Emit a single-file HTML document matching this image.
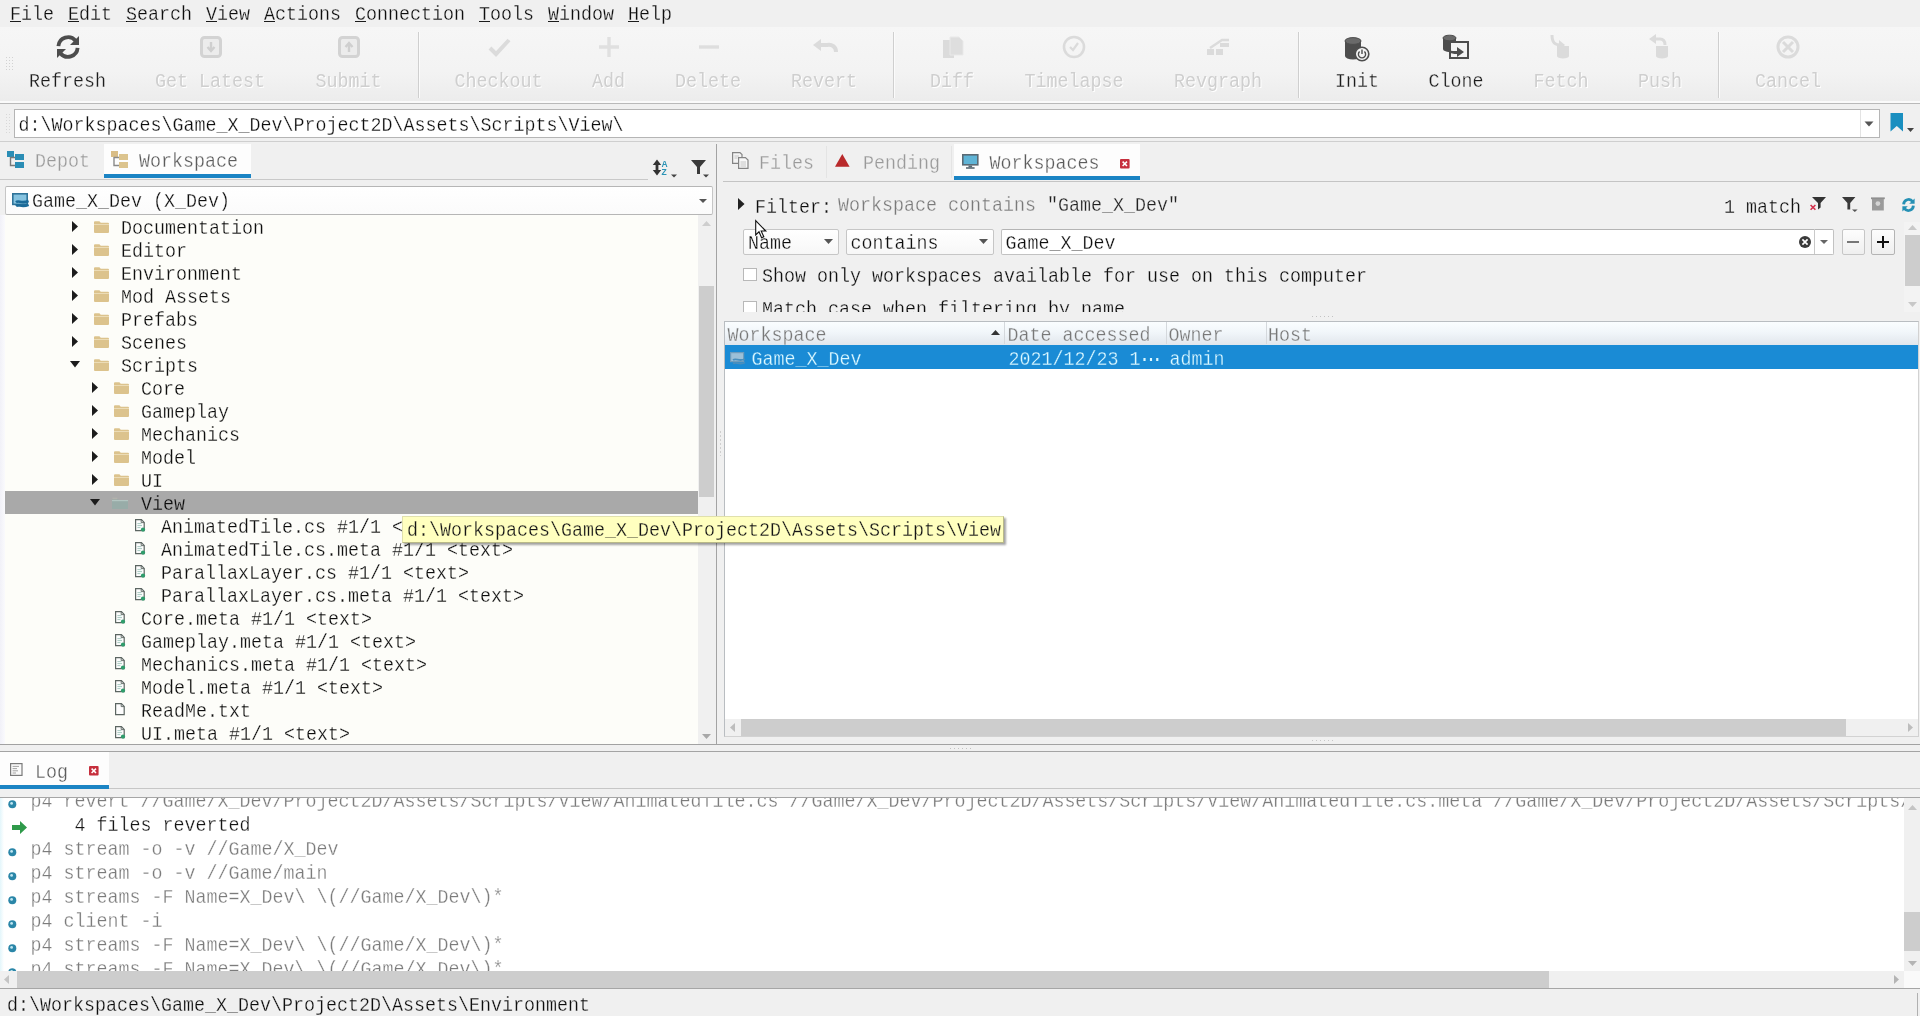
<!DOCTYPE html><html><head><meta charset="utf-8"><title>P4V</title><style>
html,body{margin:0;padding:0}
body{width:1920px;height:1016px;overflow:hidden;background:#f0f0f0;position:relative;font-family:"Liberation Mono",monospace;}
.t{position:absolute;font:18.33px/23px "Liberation Mono",monospace;white-space:pre;color:#0e0e0e;transform:scaleY(1.08);transform-origin:0 16px;}
.t u{text-decoration-thickness:1px;text-underline-offset:2px}
.dis{color:#cfcfcf;text-shadow:1px 1px 0 #fff}
.g{color:#8a8a8a}
svg{overflow:visible}
#wrap{position:absolute;left:0;top:0;width:1920px;height:1016px;will-change:transform}
</style></head><body><div id="wrap">
<div style="position:absolute;left:0px;top:0px;width:1920px;height:27px;background:#f0f0f0"></div>
<span class="t" style="left:10px;top:4px;-webkit-text-stroke:0.25px #f0f0f0;">File</span>
<div style="position:absolute;left:10px;top:21px;width:11px;height:1px;background:#1c1c1c"></div>
<span class="t" style="left:68px;top:4px;-webkit-text-stroke:0.25px #f0f0f0;">Edit</span>
<div style="position:absolute;left:68px;top:21px;width:11px;height:1px;background:#1c1c1c"></div>
<span class="t" style="left:126px;top:4px;-webkit-text-stroke:0.25px #f0f0f0;">Search</span>
<div style="position:absolute;left:126px;top:21px;width:11px;height:1px;background:#1c1c1c"></div>
<span class="t" style="left:206px;top:4px;-webkit-text-stroke:0.25px #f0f0f0;">View</span>
<div style="position:absolute;left:206px;top:21px;width:11px;height:1px;background:#1c1c1c"></div>
<span class="t" style="left:264px;top:4px;-webkit-text-stroke:0.25px #f0f0f0;">Actions</span>
<div style="position:absolute;left:264px;top:21px;width:11px;height:1px;background:#1c1c1c"></div>
<span class="t" style="left:355px;top:4px;-webkit-text-stroke:0.25px #f0f0f0;">Connection</span>
<div style="position:absolute;left:355px;top:21px;width:11px;height:1px;background:#1c1c1c"></div>
<span class="t" style="left:479px;top:4px;-webkit-text-stroke:0.25px #f0f0f0;">Tools</span>
<div style="position:absolute;left:479px;top:21px;width:11px;height:1px;background:#1c1c1c"></div>
<span class="t" style="left:548px;top:4px;-webkit-text-stroke:0.25px #f0f0f0;">Window</span>
<div style="position:absolute;left:548px;top:21px;width:11px;height:1px;background:#1c1c1c"></div>
<span class="t" style="left:628px;top:4px;-webkit-text-stroke:0.25px #f0f0f0;">Help</span>
<div style="position:absolute;left:628px;top:21px;width:11px;height:1px;background:#1c1c1c"></div>
<div style="position:absolute;left:0px;top:27px;width:1920px;height:74px;background:linear-gradient(#f6f6f6,#f3f3f3 60%,#ececec)"></div>
<div style="position:absolute;left:0px;top:101px;width:1920px;height:2px;background:#fafafa"></div>
<div style="position:absolute;left:0px;top:103px;width:1920px;height:1px;background:#b9b9b9"></div>
<div style="position:absolute;left:5px;top:56px;width:8px;height:16px;background-image:radial-gradient(#d2d2d2 0.8px,transparent 1px);background-size:3px 3px"></div>
<div style="position:absolute;left:418px;top:32px;width:1px;height:66px;background:#cfcfcf"></div>
<div style="position:absolute;left:419px;top:32px;width:1px;height:66px;background:#fbfbfb"></div>
<div style="position:absolute;left:893px;top:32px;width:1px;height:66px;background:#cfcfcf"></div>
<div style="position:absolute;left:894px;top:32px;width:1px;height:66px;background:#fbfbfb"></div>
<div style="position:absolute;left:1298px;top:32px;width:1px;height:66px;background:#cfcfcf"></div>
<div style="position:absolute;left:1299px;top:32px;width:1px;height:66px;background:#fbfbfb"></div>
<div style="position:absolute;left:1718px;top:32px;width:1px;height:66px;background:#cfcfcf"></div>
<div style="position:absolute;left:1719px;top:32px;width:1px;height:66px;background:#fbfbfb"></div>
<svg style="position:absolute;left:56px;top:35px" width="24" height="24" viewBox="0 0 24 24"><g fill="none" stroke="#4d4d4d" stroke-width="3.8">
<path d="M2.4 11.2 A9.7 9.7 0 0 1 19.6 5.8"/><path d="M21.6 12.8 A9.7 9.7 0 0 1 4.4 18.2"/></g>
<path d="M23 1 L23 10 L14 10 Z" fill="#4d4d4d"/><path d="M1 23 L1 14 L10 14 Z" fill="#4d4d4d"/></svg>
<span class="t" style="left:29.0px;top:71px;color:#1c1c1c;-webkit-text-stroke:0.25px #f0f0f0;">Refresh</span>
<svg style="position:absolute;left:200px;top:36px" width="22" height="22" viewBox="0 0 22 22"><rect x="1.5" y="1.5" width="19" height="19" rx="3" fill="#ececec" stroke="#d3d3d3" stroke-width="3"/>
<path d="M11 6 V14 M7.5 11 L11 15 L14.5 11" stroke="#cfcfcf" stroke-width="2.4" fill="none"/></svg>
<span class="t dis" style="left:155.0px;top:71px;">Get Latest</span>
<svg style="position:absolute;left:338px;top:36px" width="22" height="22" viewBox="0 0 22 22"><rect x="1.5" y="1.5" width="19" height="19" rx="3" fill="#ececec" stroke="#d3d3d3" stroke-width="3"/>
<path d="M11 16 V8 M7.5 11 L11 7 L14.5 11" stroke="#cfcfcf" stroke-width="2.4" fill="none"/></svg>
<span class="t dis" style="left:315.5px;top:71px;">Submit</span>
<svg style="position:absolute;left:488px;top:37px" width="24" height="20" viewBox="0 0 24 20"><path d="M2 11 L8 17 L21 3" stroke="#dbdbdb" stroke-width="4" fill="none"/></svg>
<span class="t dis" style="left:454.5px;top:71px;">Checkout</span>
<svg style="position:absolute;left:598px;top:36px" width="22" height="22" viewBox="0 0 22 22"><path d="M11 1 V21 M1 11 H21" stroke="#e0e0e0" stroke-width="3.4"/></svg>
<span class="t dis" style="left:592.0px;top:71px;">Add</span>
<svg style="position:absolute;left:698px;top:36px" width="22" height="22" viewBox="0 0 22 22"><path d="M1 11 H21" stroke="#dedede" stroke-width="3.4"/></svg>
<span class="t dis" style="left:675.0px;top:71px;">Delete</span>
<svg style="position:absolute;left:812px;top:38px" width="26" height="18" viewBox="0 0 26 18"><path d="M9 1 L1 7 L9 13 Z" fill="#dbdbdb"/><path d="M7 7 H15 A7 7 0 0 1 24 14" stroke="#dbdbdb" stroke-width="4" fill="none"/></svg>
<span class="t dis" style="left:791.0px;top:71px;">Revert</span>
<svg style="position:absolute;left:942px;top:36px" width="22" height="24" viewBox="0 0 22 24"><path d="M1 4 H12 V22 H1 Z" fill="#dbdbdb"/><path d="M8 1 H17 L21 5 V19 H8 Z" fill="#dedede" stroke="#e9e9e9" stroke-width="1"/></svg>
<span class="t dis" style="left:930.0px;top:71px;">Diff</span>
<svg style="position:absolute;left:1062px;top:35px" width="24" height="24" viewBox="0 0 24 24"><circle cx="12" cy="12" r="10" fill="none" stroke="#dbdbdb" stroke-width="2.6"/><path d="M8 12 L11 15 L16 8" stroke="#dbdbdb" stroke-width="2.2" fill="none"/></svg>
<span class="t dis" style="left:1024.5px;top:71px;">Timelapse</span>
<svg style="position:absolute;left:1206px;top:38px" width="24" height="18" viewBox="0 0 24 18"><path d="M1 17 V11 H8 V17 Z M10 17 V11 H17 V17 Z M14 9 V5 H23 V9 Z" fill="#dbdbdb"/><path d="M4 10 L16 2 L23 2" stroke="#dbdbdb" stroke-width="2.4" fill="none"/></svg>
<span class="t dis" style="left:1174.0px;top:71px;">Revgraph</span>
<svg style="position:absolute;left:1344px;top:36px" width="26" height="26" viewBox="0 0 26 26"><path d="M1 5 V20 A8 3.4 0 0 0 17 20 V5 Z" fill="#4d4d4d"/><ellipse cx="9" cy="5" rx="8" ry="3.4" fill="#6a6a6a" stroke="#4d4d4d" stroke-width="1"/>
<circle cx="18" cy="18" r="6.8" fill="#f4f4f4" stroke="#4d4d4d" stroke-width="1.6"/><path d="M15.6 15.6 A3.6 3.6 0 1 0 20.4 15.6 M18 13.6 V18" stroke="#4d4d4d" stroke-width="1.4" fill="none"/></svg>
<span class="t" style="left:1335.0px;top:71px;color:#1c1c1c;-webkit-text-stroke:0.25px #f0f0f0;">Init</span>
<svg style="position:absolute;left:1442px;top:34px" width="28" height="26" viewBox="0 0 28 26"><path d="M1 4 V15 A6.5 3 0 0 0 14 15 V4 Z" fill="#4d4d4d"/><ellipse cx="7.5" cy="4" rx="6.5" ry="2.8" fill="#6a6a6a" stroke="#4d4d4d" stroke-width="1"/>
<rect x="8" y="8" width="18" height="16" fill="#f4f4f4" stroke="#4d4d4d" stroke-width="2"/><path d="M3 10 C5 17 9 17 15 17 V13 L22 18 L15 23 V20 C8 20 4 18 3 10 Z" fill="#4d4d4d"/></svg>
<span class="t" style="left:1428.5px;top:71px;color:#1c1c1c;-webkit-text-stroke:0.25px #f0f0f0;">Clone</span>
<svg style="position:absolute;left:1549px;top:34px" width="24" height="26" viewBox="0 0 24 26"><path d="M8 12 V22 A6 2.6 0 0 0 20 22 V12 Z" fill="#dbdbdb"/><path d="M3 1 C3 9 6 11 12 11" stroke="#dbdbdb" stroke-width="3" fill="none"/><path d="M10 6 L16 11 L10 16 Z" fill="#dbdbdb"/></svg>
<span class="t dis" style="left:1533.5px;top:71px;">Fetch</span>
<svg style="position:absolute;left:1648px;top:34px" width="24" height="26" viewBox="0 0 24 26"><path d="M8 12 V22 A6 2.6 0 0 0 20 22 V12 Z" fill="#dbdbdb"/><path d="M5 5 H12 C16 5 17 8 17 11" stroke="#dbdbdb" stroke-width="3" fill="none"/><path d="M8 0 L1 5 L8 10 Z" fill="#dbdbdb"/></svg>
<span class="t dis" style="left:1638.0px;top:71px;">Push</span>
<svg style="position:absolute;left:1776px;top:35px" width="24" height="24" viewBox="0 0 24 24"><circle cx="12" cy="12" r="10" fill="none" stroke="#dbdbdb" stroke-width="3"/><path d="M7 7 L17 17 M17 7 L7 17" stroke="#dbdbdb" stroke-width="3"/></svg>
<span class="t dis" style="left:1755.0px;top:71px;">Cancel</span>
<div style="position:absolute;left:14px;top:109px;width:1866px;height:29px;background:#fff;border:1px solid #b5b5b5;box-sizing:border-box"></div>
<div style="position:absolute;left:5px;top:113px;width:6px;height:20px;background-image:radial-gradient(#d8d8d8 0.8px,transparent 1px);background-size:3px 3px"></div>
<span class="t" style="left:18.5px;top:115px;-webkit-text-stroke:0.25px #fff;">d:\Workspaces\Game_X_Dev\Project2D\Assets\Scripts\View\</span>
<div style="position:absolute;left:1860px;top:110px;width:1px;height:27px;background:#e3e3e3"></div>
<svg style="position:absolute;left:1864px;top:121px" width="10" height="6" viewBox="0 0 10 6"><path d="M0.5 0.5 H9.5 L5 5.5 Z" fill="#555"/></svg>
<svg style="position:absolute;left:1890px;top:113px" width="14" height="19" viewBox="0 0 14 19"><path d="M0.5 0 H13 V18.5 L6.8 13 L0.5 18.5 Z" fill="#1a8fc0"/></svg>
<svg style="position:absolute;left:1907px;top:128px" width="7" height="4" viewBox="0 0 7 4"><path d="M0 0 H7 L3.5 4 Z" fill="#444"/></svg>
<div style="position:absolute;left:0px;top:141px;width:1920px;height:1px;background:#cfcfcf"></div>
<div style="position:absolute;left:104px;top:144px;width:147px;height:30px;background:#fdfdfd"></div>
<div style="position:absolute;left:104px;top:174px;width:147px;height:4px;background:#1b84c4"></div>
<div style="position:absolute;left:0px;top:179px;width:648px;height:1px;background:#c9c9c9"></div>
<svg style="position:absolute;left:7px;top:150px" width="18" height="18" viewBox="0 0 18 18"><rect x="0" y="1" width="7" height="6" fill="#2a8db5"/><rect x="8" y="4" width="9" height="6" fill="#2a8db5"/><rect x="8" y="12" width="9" height="6" fill="#2a8db5"/>
<path d="M3.5 7 V15.5 H8 M3.5 7.5 H8" stroke="#7a7a7a" stroke-width="1.4" fill="none"/></svg>
<span class="t" style="left:35px;top:151px;color:#9a9a9a;-webkit-text-stroke:0.25px #f0f0f0;">Depot</span>
<svg style="position:absolute;left:111px;top:151px" width="18" height="17" viewBox="0 0 18 17"><rect x="0" y="0" width="7" height="6" fill="#d9bd86"/><rect x="8" y="3" width="9" height="6" fill="#dcc48e"/><rect x="8" y="11" width="9" height="6" fill="#dcc48e"/>
<path d="M3 6 V14.5 H8 M3 6.5 H8" stroke="#8a8a8a" stroke-width="1.4" fill="none"/></svg>
<span class="t" style="left:139px;top:151px;color:#5c5c5c;-webkit-text-stroke:0.25px #fdfdfd;">Workspace</span>
<svg style="position:absolute;left:652px;top:159px" width="26" height="19" viewBox="0 0 26 19"><path d="M5 0.5 L9.2 6 H6.4 V11 H9.2 L5 16.5 L0.8 11 H3.6 V6 H0.8 Z" fill="#333"/>
<text x="9.5" y="8" font-family="Liberation Sans" font-weight="bold" font-size="8.5" fill="#2a93b5">A</text><text x="9.5" y="16" font-family="Liberation Sans" font-weight="bold" font-size="8.5" fill="#2a93b5">Z</text>
<path d="M19 15.5 H25 L22 18.5 Z" fill="#444"/></svg>
<svg style="position:absolute;left:691px;top:160px" width="18" height="19" viewBox="0 0 18 19"><path d="M0 0 H15 L9 7 V14 H6 V7 Z" fill="#3a3a3a"/><path d="M12 14.5 H18 L15 17.5 Z" fill="#444"/></svg>
<div style="position:absolute;left:5px;top:186px;width:708px;height:29px;background:linear-gradient(#ffffff,#fbfbfb);border:1px solid #c6c6c6;border-top-color:#b6b6b6;border-bottom-color:#b6b6b6;box-sizing:border-box;border-radius:2px"></div>
<svg style="position:absolute;left:12px;top:193px" width="18" height="16" viewBox="0 0 18 16"><rect x="0.8" y="0.8" width="14.4" height="10.6" fill="#86c3e0" stroke="#2f7399" stroke-width="1.6"/>
<path d="M4 9.2 C6.5 7 9.5 11 16.6 8 M4 13 C6.5 10.8 9.5 14.8 16.6 11.8" stroke="#1b6b99" stroke-width="2.6" fill="none"/></svg>
<span class="t" style="left:32px;top:191px;-webkit-text-stroke:0.25px #fdfdfd;">Game_X_Dev (X_Dev)</span>
<svg style="position:absolute;left:699px;top:199px" width="8" height="4" viewBox="0 0 8 4"><path d="M0 0 H8 L4 4 Z" fill="#555"/></svg>
<div style="position:absolute;left:0px;top:215px;width:5px;height:529px;background:linear-gradient(90deg,#f1f1f8,#fafafd)"></div>
<div style="position:absolute;left:5px;top:215px;width:693px;height:529px;background:#fdfdf9"></div>
<div style="position:absolute;left:5px;top:491px;width:693px;height:23px;background:#a9a9a9"></div>
<div style="position:absolute;left:0px;top:744px;width:1920px;height:1px;background:#a2a2a2"></div>
<svg style="position:absolute;left:72px;top:220.5px" width="7" height="11" viewBox="0 0 7 11"><path d="M0 0 L6 5.5 L0 11 Z" fill="#1c1c1c"/></svg>
<svg style="position:absolute;left:94px;top:220.6px" width="15" height="12" viewBox="0 0 15 12"><path d="M0 1.2 Q0 0.2 1 0.2 H5.4 L6.8 1.8 H14 Q15 1.8 15 2.8 V11 Q15 12 14 12 H1 Q0 12 0 11 Z" fill="#dcc38d"/><rect x="0" y="3" width="15" height="1" fill="#ecdcb6"/></svg>
<span class="t" style="left:121px;top:218px;-webkit-text-stroke:0.25px #fdfdf9;">Documentation</span>
<svg style="position:absolute;left:72px;top:243.5px" width="7" height="11" viewBox="0 0 7 11"><path d="M0 0 L6 5.5 L0 11 Z" fill="#1c1c1c"/></svg>
<svg style="position:absolute;left:94px;top:243.6px" width="15" height="12" viewBox="0 0 15 12"><path d="M0 1.2 Q0 0.2 1 0.2 H5.4 L6.8 1.8 H14 Q15 1.8 15 2.8 V11 Q15 12 14 12 H1 Q0 12 0 11 Z" fill="#dcc38d"/><rect x="0" y="3" width="15" height="1" fill="#ecdcb6"/></svg>
<span class="t" style="left:121px;top:241px;-webkit-text-stroke:0.25px #fdfdf9;">Editor</span>
<svg style="position:absolute;left:72px;top:266.5px" width="7" height="11" viewBox="0 0 7 11"><path d="M0 0 L6 5.5 L0 11 Z" fill="#1c1c1c"/></svg>
<svg style="position:absolute;left:94px;top:266.6px" width="15" height="12" viewBox="0 0 15 12"><path d="M0 1.2 Q0 0.2 1 0.2 H5.4 L6.8 1.8 H14 Q15 1.8 15 2.8 V11 Q15 12 14 12 H1 Q0 12 0 11 Z" fill="#dcc38d"/><rect x="0" y="3" width="15" height="1" fill="#ecdcb6"/></svg>
<span class="t" style="left:121px;top:264px;-webkit-text-stroke:0.25px #fdfdf9;">Environment</span>
<svg style="position:absolute;left:72px;top:289.5px" width="7" height="11" viewBox="0 0 7 11"><path d="M0 0 L6 5.5 L0 11 Z" fill="#1c1c1c"/></svg>
<svg style="position:absolute;left:94px;top:289.6px" width="15" height="12" viewBox="0 0 15 12"><path d="M0 1.2 Q0 0.2 1 0.2 H5.4 L6.8 1.8 H14 Q15 1.8 15 2.8 V11 Q15 12 14 12 H1 Q0 12 0 11 Z" fill="#dcc38d"/><rect x="0" y="3" width="15" height="1" fill="#ecdcb6"/></svg>
<span class="t" style="left:121px;top:287px;-webkit-text-stroke:0.25px #fdfdf9;">Mod Assets</span>
<svg style="position:absolute;left:72px;top:312.5px" width="7" height="11" viewBox="0 0 7 11"><path d="M0 0 L6 5.5 L0 11 Z" fill="#1c1c1c"/></svg>
<svg style="position:absolute;left:94px;top:312.6px" width="15" height="12" viewBox="0 0 15 12"><path d="M0 1.2 Q0 0.2 1 0.2 H5.4 L6.8 1.8 H14 Q15 1.8 15 2.8 V11 Q15 12 14 12 H1 Q0 12 0 11 Z" fill="#dcc38d"/><rect x="0" y="3" width="15" height="1" fill="#ecdcb6"/></svg>
<span class="t" style="left:121px;top:310px;-webkit-text-stroke:0.25px #fdfdf9;">Prefabs</span>
<svg style="position:absolute;left:72px;top:335.5px" width="7" height="11" viewBox="0 0 7 11"><path d="M0 0 L6 5.5 L0 11 Z" fill="#1c1c1c"/></svg>
<svg style="position:absolute;left:94px;top:335.6px" width="15" height="12" viewBox="0 0 15 12"><path d="M0 1.2 Q0 0.2 1 0.2 H5.4 L6.8 1.8 H14 Q15 1.8 15 2.8 V11 Q15 12 14 12 H1 Q0 12 0 11 Z" fill="#dcc38d"/><rect x="0" y="3" width="15" height="1" fill="#ecdcb6"/></svg>
<span class="t" style="left:121px;top:333px;-webkit-text-stroke:0.25px #fdfdf9;">Scenes</span>
<svg style="position:absolute;left:70px;top:361px" width="10" height="7" viewBox="0 0 10 7"><path d="M0 0 H10 L5 6.5 Z" fill="#1c1c1c"/></svg>
<svg style="position:absolute;left:94px;top:358.6px" width="15" height="12" viewBox="0 0 15 12"><path d="M0 1.2 Q0 0.2 1 0.2 H5.4 L6.8 1.8 H14 Q15 1.8 15 2.8 V11 Q15 12 14 12 H1 Q0 12 0 11 Z" fill="#dcc38d"/><rect x="0" y="3" width="15" height="1" fill="#ecdcb6"/></svg>
<span class="t" style="left:121px;top:356px;-webkit-text-stroke:0.25px #fdfdf9;">Scripts</span>
<svg style="position:absolute;left:92px;top:381.5px" width="7" height="11" viewBox="0 0 7 11"><path d="M0 0 L6 5.5 L0 11 Z" fill="#1c1c1c"/></svg>
<svg style="position:absolute;left:114px;top:381.6px" width="15" height="12" viewBox="0 0 15 12"><path d="M0 1.2 Q0 0.2 1 0.2 H5.4 L6.8 1.8 H14 Q15 1.8 15 2.8 V11 Q15 12 14 12 H1 Q0 12 0 11 Z" fill="#dcc38d"/><rect x="0" y="3" width="15" height="1" fill="#ecdcb6"/></svg>
<span class="t" style="left:141px;top:379px;-webkit-text-stroke:0.25px #fdfdf9;">Core</span>
<svg style="position:absolute;left:92px;top:404.5px" width="7" height="11" viewBox="0 0 7 11"><path d="M0 0 L6 5.5 L0 11 Z" fill="#1c1c1c"/></svg>
<svg style="position:absolute;left:114px;top:404.6px" width="15" height="12" viewBox="0 0 15 12"><path d="M0 1.2 Q0 0.2 1 0.2 H5.4 L6.8 1.8 H14 Q15 1.8 15 2.8 V11 Q15 12 14 12 H1 Q0 12 0 11 Z" fill="#dcc38d"/><rect x="0" y="3" width="15" height="1" fill="#ecdcb6"/></svg>
<span class="t" style="left:141px;top:402px;-webkit-text-stroke:0.25px #fdfdf9;">Gameplay</span>
<svg style="position:absolute;left:92px;top:427.5px" width="7" height="11" viewBox="0 0 7 11"><path d="M0 0 L6 5.5 L0 11 Z" fill="#1c1c1c"/></svg>
<svg style="position:absolute;left:114px;top:427.6px" width="15" height="12" viewBox="0 0 15 12"><path d="M0 1.2 Q0 0.2 1 0.2 H5.4 L6.8 1.8 H14 Q15 1.8 15 2.8 V11 Q15 12 14 12 H1 Q0 12 0 11 Z" fill="#dcc38d"/><rect x="0" y="3" width="15" height="1" fill="#ecdcb6"/></svg>
<span class="t" style="left:141px;top:425px;-webkit-text-stroke:0.25px #fdfdf9;">Mechanics</span>
<svg style="position:absolute;left:92px;top:450.5px" width="7" height="11" viewBox="0 0 7 11"><path d="M0 0 L6 5.5 L0 11 Z" fill="#1c1c1c"/></svg>
<svg style="position:absolute;left:114px;top:450.6px" width="15" height="12" viewBox="0 0 15 12"><path d="M0 1.2 Q0 0.2 1 0.2 H5.4 L6.8 1.8 H14 Q15 1.8 15 2.8 V11 Q15 12 14 12 H1 Q0 12 0 11 Z" fill="#dcc38d"/><rect x="0" y="3" width="15" height="1" fill="#ecdcb6"/></svg>
<span class="t" style="left:141px;top:448px;-webkit-text-stroke:0.25px #fdfdf9;">Model</span>
<svg style="position:absolute;left:92px;top:473.5px" width="7" height="11" viewBox="0 0 7 11"><path d="M0 0 L6 5.5 L0 11 Z" fill="#1c1c1c"/></svg>
<svg style="position:absolute;left:114px;top:473.6px" width="15" height="12" viewBox="0 0 15 12"><path d="M0 1.2 Q0 0.2 1 0.2 H5.4 L6.8 1.8 H14 Q15 1.8 15 2.8 V11 Q15 12 14 12 H1 Q0 12 0 11 Z" fill="#dcc38d"/><rect x="0" y="3" width="15" height="1" fill="#ecdcb6"/></svg>
<span class="t" style="left:141px;top:471px;-webkit-text-stroke:0.25px #fdfdf9;">UI</span>
<svg style="position:absolute;left:90px;top:499px" width="10" height="7" viewBox="0 0 10 7"><path d="M0 0 H10 L5 6.5 Z" fill="#1c1c1c"/></svg>
<svg style="position:absolute;left:112px;top:496.6px" width="16" height="12" viewBox="0 0 16 12"><path d="M0 2.2 H6 L7 3 H16 V12 H0 Z" fill="#98aca8"/><rect x="0" y="3" width="16" height="1.2" fill="#b4c6c2"/><path d="M0.4 0.6 H5.4 V2.4 H0.4 Z" fill="#b2b2ac"/></svg>
<span class="t" style="left:141px;top:494px;-webkit-text-stroke:0.25px #a9a9a9;">View</span>
<svg style="position:absolute;left:135px;top:518.5px" width="10" height="13" viewBox="0 0 10 13"><path d="M0.6 0.6 H6.4 L9.2 3.4 V11.6 H0.6 Z" fill="#fdfdfd" stroke="#5c6662" stroke-width="1.2"/><path d="M6.2 0.6 V3.6 H9.2" fill="none" stroke="#5c6662" stroke-width="0.9"/><path d="M2.4 4.6 H6.4 M2.4 6.6 H7 M2.4 8.6 H5.4" stroke="#9ec4ba" stroke-width="0.9"/><circle cx="8" cy="10.6" r="2.1" fill="#2f9d6c"/></svg>
<span class="t" style="left:161px;top:517px;-webkit-text-stroke:0.25px #fdfdf9;">AnimatedTile.cs #1/1 &lt;text&gt;</span>
<svg style="position:absolute;left:135px;top:541.5px" width="10" height="13" viewBox="0 0 10 13"><path d="M0.6 0.6 H6.4 L9.2 3.4 V11.6 H0.6 Z" fill="#fdfdfd" stroke="#5c6662" stroke-width="1.2"/><path d="M6.2 0.6 V3.6 H9.2" fill="none" stroke="#5c6662" stroke-width="0.9"/><path d="M2.4 4.6 H6.4 M2.4 6.6 H7 M2.4 8.6 H5.4" stroke="#9ec4ba" stroke-width="0.9"/><circle cx="8" cy="10.6" r="2.1" fill="#2f9d6c"/></svg>
<span class="t" style="left:161px;top:540px;-webkit-text-stroke:0.25px #fdfdf9;">AnimatedTile.cs.meta #1/1 &lt;text&gt;</span>
<svg style="position:absolute;left:135px;top:564.5px" width="10" height="13" viewBox="0 0 10 13"><path d="M0.6 0.6 H6.4 L9.2 3.4 V11.6 H0.6 Z" fill="#fdfdfd" stroke="#5c6662" stroke-width="1.2"/><path d="M6.2 0.6 V3.6 H9.2" fill="none" stroke="#5c6662" stroke-width="0.9"/><path d="M2.4 4.6 H6.4 M2.4 6.6 H7 M2.4 8.6 H5.4" stroke="#9ec4ba" stroke-width="0.9"/><circle cx="8" cy="10.6" r="2.1" fill="#2f9d6c"/></svg>
<span class="t" style="left:161px;top:563px;-webkit-text-stroke:0.25px #fdfdf9;">ParallaxLayer.cs #1/1 &lt;text&gt;</span>
<svg style="position:absolute;left:135px;top:587.5px" width="10" height="13" viewBox="0 0 10 13"><path d="M0.6 0.6 H6.4 L9.2 3.4 V11.6 H0.6 Z" fill="#fdfdfd" stroke="#5c6662" stroke-width="1.2"/><path d="M6.2 0.6 V3.6 H9.2" fill="none" stroke="#5c6662" stroke-width="0.9"/><path d="M2.4 4.6 H6.4 M2.4 6.6 H7 M2.4 8.6 H5.4" stroke="#9ec4ba" stroke-width="0.9"/><circle cx="8" cy="10.6" r="2.1" fill="#2f9d6c"/></svg>
<span class="t" style="left:161px;top:586px;-webkit-text-stroke:0.25px #fdfdf9;">ParallaxLayer.cs.meta #1/1 &lt;text&gt;</span>
<svg style="position:absolute;left:115px;top:610.5px" width="10" height="13" viewBox="0 0 10 13"><path d="M0.6 0.6 H6.4 L9.2 3.4 V11.6 H0.6 Z" fill="#fdfdfd" stroke="#5c6662" stroke-width="1.2"/><path d="M6.2 0.6 V3.6 H9.2" fill="none" stroke="#5c6662" stroke-width="0.9"/><path d="M2.4 4.6 H6.4 M2.4 6.6 H7 M2.4 8.6 H5.4" stroke="#9ec4ba" stroke-width="0.9"/><circle cx="8" cy="10.6" r="2.1" fill="#2f9d6c"/></svg>
<span class="t" style="left:141px;top:609px;-webkit-text-stroke:0.25px #fdfdf9;">Core.meta #1/1 &lt;text&gt;</span>
<svg style="position:absolute;left:115px;top:633.5px" width="10" height="13" viewBox="0 0 10 13"><path d="M0.6 0.6 H6.4 L9.2 3.4 V11.6 H0.6 Z" fill="#fdfdfd" stroke="#5c6662" stroke-width="1.2"/><path d="M6.2 0.6 V3.6 H9.2" fill="none" stroke="#5c6662" stroke-width="0.9"/><path d="M2.4 4.6 H6.4 M2.4 6.6 H7 M2.4 8.6 H5.4" stroke="#9ec4ba" stroke-width="0.9"/><circle cx="8" cy="10.6" r="2.1" fill="#2f9d6c"/></svg>
<span class="t" style="left:141px;top:632px;-webkit-text-stroke:0.25px #fdfdf9;">Gameplay.meta #1/1 &lt;text&gt;</span>
<svg style="position:absolute;left:115px;top:656.5px" width="10" height="13" viewBox="0 0 10 13"><path d="M0.6 0.6 H6.4 L9.2 3.4 V11.6 H0.6 Z" fill="#fdfdfd" stroke="#5c6662" stroke-width="1.2"/><path d="M6.2 0.6 V3.6 H9.2" fill="none" stroke="#5c6662" stroke-width="0.9"/><path d="M2.4 4.6 H6.4 M2.4 6.6 H7 M2.4 8.6 H5.4" stroke="#9ec4ba" stroke-width="0.9"/><circle cx="8" cy="10.6" r="2.1" fill="#2f9d6c"/></svg>
<span class="t" style="left:141px;top:655px;-webkit-text-stroke:0.25px #fdfdf9;">Mechanics.meta #1/1 &lt;text&gt;</span>
<svg style="position:absolute;left:115px;top:679.5px" width="10" height="13" viewBox="0 0 10 13"><path d="M0.6 0.6 H6.4 L9.2 3.4 V11.6 H0.6 Z" fill="#fdfdfd" stroke="#5c6662" stroke-width="1.2"/><path d="M6.2 0.6 V3.6 H9.2" fill="none" stroke="#5c6662" stroke-width="0.9"/><path d="M2.4 4.6 H6.4 M2.4 6.6 H7 M2.4 8.6 H5.4" stroke="#9ec4ba" stroke-width="0.9"/><circle cx="8" cy="10.6" r="2.1" fill="#2f9d6c"/></svg>
<span class="t" style="left:141px;top:678px;-webkit-text-stroke:0.25px #fdfdf9;">Model.meta #1/1 &lt;text&gt;</span>
<svg style="position:absolute;left:115px;top:702.5px" width="10" height="13" viewBox="0 0 10 13"><path d="M0.6 0.6 H6.4 L9.2 3.4 V11.6 H0.6 Z" fill="#fdfdfd" stroke="#5c6662" stroke-width="1.2"/><path d="M6.2 0.6 V3.6 H9.2" fill="none" stroke="#5c6662" stroke-width="0.9"/></svg>
<span class="t" style="left:141px;top:701px;-webkit-text-stroke:0.25px #fdfdf9;">ReadMe.txt</span>
<svg style="position:absolute;left:115px;top:725.5px" width="10" height="13" viewBox="0 0 10 13"><path d="M0.6 0.6 H6.4 L9.2 3.4 V11.6 H0.6 Z" fill="#fdfdfd" stroke="#5c6662" stroke-width="1.2"/><path d="M6.2 0.6 V3.6 H9.2" fill="none" stroke="#5c6662" stroke-width="0.9"/><path d="M2.4 4.6 H6.4 M2.4 6.6 H7 M2.4 8.6 H5.4" stroke="#9ec4ba" stroke-width="0.9"/><circle cx="8" cy="10.6" r="2.1" fill="#2f9d6c"/></svg>
<span class="t" style="left:141px;top:724px;-webkit-text-stroke:0.25px #fdfdf9;">UI.meta #1/1 &lt;text&gt;</span>
<div style="position:absolute;left:698px;top:215px;width:16px;height:529px;background:#f0f0f0"></div>
<div style="position:absolute;left:698.5px;top:286px;width:15.5px;height:211px;background:#cdcdcd"></div>
<svg style="position:absolute;left:702px;top:221px" width="9" height="5" viewBox="0 0 9 5"><path d="M0 5 H9 L4.5 0 Z" fill="#cecece"/></svg>
<svg style="position:absolute;left:702px;top:734px" width="9" height="5" viewBox="0 0 9 5"><path d="M0 0 H9 L4.5 5 Z" fill="#a8a8a8"/></svg>
<div style="position:absolute;left:716px;top:144px;width:1px;height:600px;background:#a3a3a3"></div>
<div style="position:absolute;left:719px;top:430px;width:3px;height:26px;background-image:radial-gradient(#cfcfcf 0.8px,transparent 1px);background-size:3px 4px"></div>
<div style="position:absolute;left:954px;top:144px;width:186px;height:32px;background:#fdfdfd"></div>
<div style="position:absolute;left:954px;top:176px;width:186px;height:4px;background:#1b84c4"></div>
<div style="position:absolute;left:723px;top:181px;width:1197px;height:1px;background:#c4c4c4"></div>
<div style="position:absolute;left:826px;top:146px;width:1px;height:32px;background:#e4e4e4"></div>
<div style="position:absolute;left:951px;top:146px;width:1px;height:32px;background:#e4e4e4"></div>
<svg style="position:absolute;left:732px;top:152px" width="17" height="17" viewBox="0 0 17 17"><path d="M0.6 0.6 H8 L10 2.6 V11.4 H0.6 Z" fill="#f4f4f4" stroke="#858585" stroke-width="1.2"/><path d="M6.6 5.6 H13.4 L16 8 V16.4 H6.6 Z" fill="#f8f8f8" stroke="#858585" stroke-width="1.2"/><path d="M8.5 10 H14 M8.5 12 H14 M8.5 14 H14 M2.5 4 H7 M2.5 6 H5.5" stroke="#c0c0c0" stroke-width="0.9"/></svg>
<span class="t" style="left:759px;top:153px;color:#9a9a9a;-webkit-text-stroke:0.25px #f0f0f0;">Files</span>
<svg style="position:absolute;left:835px;top:154px" width="15" height="13" viewBox="0 0 15 13"><path d="M7.3 0 L14.6 12.8 H0 Z" fill="#b9292b"/></svg>
<span class="t" style="left:863px;top:153px;color:#9a9a9a;-webkit-text-stroke:0.25px #f0f0f0;">Pending</span>
<svg style="position:absolute;left:962px;top:154px" width="17" height="15" viewBox="0 0 17 15"><rect x="0.8" y="0.8" width="15" height="10" fill="#5fb4d6" stroke="#5a6a74" stroke-width="1.6"/><rect x="6.5" y="11.5" width="3.6" height="2" fill="#5a6a74"/><rect x="4" y="13.2" width="8.6" height="1.6" fill="#5a6a74"/></svg>
<span class="t" style="left:989.5px;top:153px;color:#5c5c5c;-webkit-text-stroke:0.25px #fdfdfd;">Workspaces</span>
<svg style="position:absolute;left:1119.5px;top:158.5px" width="10" height="10" viewBox="0 0 10 10"><rect x="0" y="0" width="9.6" height="9.6" rx="1" fill="#c62f3d"/><path d="M2.6 2.6 L7 7 M7 2.6 L2.6 7" stroke="#fff" stroke-width="1.5"/></svg>
<svg style="position:absolute;left:738px;top:198px" width="7" height="12" viewBox="0 0 7 12"><path d="M0 0 L6.5 6 L0 12 Z" fill="#222"/></svg>
<span class="t" style="left:755px;top:197px;-webkit-text-stroke:0.25px #f0f0f0;">Filter:</span>
<span class="t" style="left:838px;top:195px;color:#7a7a7a;-webkit-text-stroke:0.25px #f0f0f0;">Workspace contains</span>
<span class="t" style="left:1047px;top:195px;color:#222;-webkit-text-stroke:0.25px #f0f0f0;">″Game_X_Dev″</span>
<span class="t" style="left:1724px;top:197px;-webkit-text-stroke:0.25px #f0f0f0;">1 match</span>
<svg style="position:absolute;left:1810px;top:197px" width="17" height="15" viewBox="0 0 17 15"><path d="M2 0 H16 L10.6 6 V10.5 L8 12.4 V6 Z" fill="#333"/><path d="M0.6 8 L5.4 12.8 M5.4 8 L0.6 12.8" stroke="#d3304c" stroke-width="1.6"/></svg>
<svg style="position:absolute;left:1842px;top:197px" width="18" height="16" viewBox="0 0 18 16"><path d="M0 0 H13.4 L8.2 6 V12.4 H5.4 V6 Z" fill="#3a3a3a"/><path d="M10 12.4 H15.6 L12.8 15 Z" fill="#555"/></svg>
<svg style="position:absolute;left:1871px;top:197px" width="14" height="14" viewBox="0 0 14 14"><rect x="1" y="1.5" width="11.8" height="12" fill="#9b9b9b"/><rect x="0" y="0.4" width="13.8" height="1.8" fill="#8f8f8f"/><circle cx="6.9" cy="6.6" r="2.4" fill="#d4d4d4"/></svg>
<svg style="position:absolute;left:1901.5px;top:198px" width="13" height="14" viewBox="0 0 13 14"><g fill="none" stroke="#2590b4" stroke-width="2.8"><path d="M1.6 6.4 A5 5.2 0 0 1 10.6 3.6"/><path d="M11.4 7.6 A5 5.2 0 0 1 2.4 10.4"/></g><path d="M12.6 0.4 V5.8 H7.2 Z" fill="#2590b4"/><path d="M0.4 13.6 V8.2 H5.8 Z" fill="#2590b4"/></svg>
<div style="position:absolute;left:743px;top:228.5px;width:96px;height:26.5px;background:linear-gradient(#ffffff,#f7f7f7);border:1px solid #c6c6c6;box-sizing:border-box;border-radius:2px"></div>
<span class="t" style="left:748px;top:233px;-webkit-text-stroke:0.25px #fbfbfb;">Name</span>
<svg style="position:absolute;left:824px;top:239px" width="9" height="5" viewBox="0 0 9 5"><path d="M0 0 H9 L4.5 5 Z" fill="#555"/></svg>
<div style="position:absolute;left:845.5px;top:228.5px;width:148.5px;height:26.5px;background:linear-gradient(#ffffff,#f7f7f7);border:1px solid #c6c6c6;box-sizing:border-box;border-radius:2px"></div>
<span class="t" style="left:850.5px;top:233px;-webkit-text-stroke:0.25px #fbfbfb;">contains</span>
<svg style="position:absolute;left:979px;top:239px" width="9" height="5" viewBox="0 0 9 5"><path d="M0 0 H9 L4.5 5 Z" fill="#555"/></svg>
<div style="position:absolute;left:1001px;top:228.5px;width:833px;height:26.5px;background:#fff;border:1px solid #c2c2c2;border-top-color:#b4b4b4;box-sizing:border-box;border-radius:2px"></div>
<span class="t" style="left:1005.5px;top:233px;-webkit-text-stroke:0.25px #fff;">Game_X_Dev</span>
<div style="position:absolute;left:1814px;top:229px;width:1px;height:25px;background:#c9c9c9"></div>
<svg style="position:absolute;left:1798.5px;top:235.5px" width="12" height="12" viewBox="0 0 12 12"><circle cx="6" cy="6" r="6" fill="#3a3a3a"/><path d="M3.4 3.4 L8.6 8.6 M8.6 3.4 L3.4 8.6" stroke="#fff" stroke-width="1.7"/></svg>
<svg style="position:absolute;left:1819.5px;top:239.5px" width="8" height="4" viewBox="0 0 8 4"><path d="M0 0 H8 L4 4 Z" fill="#666"/></svg>
<div style="position:absolute;left:1841.5px;top:228.5px;width:23px;height:26.5px;background:linear-gradient(#fdfdfd,#efefef);border:1px solid #c6c6c6;box-sizing:border-box;border-radius:2px"></div>
<div style="position:absolute;left:1847px;top:241px;width:12px;height:1.6px;background:#777"></div>
<div style="position:absolute;left:1871px;top:228.5px;width:24px;height:26.5px;background:linear-gradient(#fdfdfd,#efefef);border:1px solid #c6c6c6;box-sizing:border-box;border-radius:2px;border-color:#b4b4b4"></div>
<div style="position:absolute;left:1877px;top:240.6px;width:12px;height:2.2px;background:#111"></div>
<div style="position:absolute;left:1881.9px;top:235.7px;width:2.2px;height:12px;background:#111"></div>
<div style="position:absolute;left:743px;top:267.5px;width:13.5px;height:13.5px;background:#fff;border:1px solid #b8b8b8;box-sizing:border-box"></div>
<span class="t" style="left:762px;top:266px;-webkit-text-stroke:0.25px #f0f0f0;">Show only workspaces available for use on this computer</span>
<div style="position:absolute;left:723px;top:296px;width:1180px;height:15.5px;overflow:hidden">
<div style="position:absolute;left:20px;top:4.5px;width:13.5px;height:13.5px;background:#fff;border:1px solid #b8b8b8;box-sizing:border-box"></div>
<span class="t" style="left:39px;top:3px;-webkit-text-stroke:0.25px #f0f0f0">Match case when filtering by name</span>
</div>
<div style="position:absolute;left:1904px;top:222px;width:16px;height:90px;background:#f3f3f3"></div>
<div style="position:absolute;left:1904.5px;top:235px;width:15.5px;height:51px;background:#cdcdcd"></div>
<svg style="position:absolute;left:1908px;top:225px" width="9" height="5" viewBox="0 0 9 5"><path d="M0 5 H9 L4.5 0 Z" fill="#c8c8c8"/></svg>
<svg style="position:absolute;left:1908px;top:302px" width="9" height="5" viewBox="0 0 9 5"><path d="M0 0 H9 L4.5 5 Z" fill="#c8c8c8"/></svg>
<div style="position:absolute;left:1312px;top:316px;width:21px;height:1px;background:repeating-linear-gradient(90deg,#c2c2c2 0 1px,transparent 1px 4px)"></div>
<div style="position:absolute;left:724px;top:320.5px;width:1195px;height:416px;background:#fff;border:1px solid #b9bdc1;border-right-color:#d2d2d2;border-bottom-color:#d2d2d2;box-sizing:border-box"></div>
<div style="position:absolute;left:725px;top:321.5px;width:1193px;height:23.5px;background:linear-gradient(#fafdff,#f1f6fa 45%,#e1e6ec)"></div>
<span class="t" style="left:727.5px;top:325px;color:#787878;-webkit-text-stroke:0.25px #ecf1f5;">Workspace</span>
<svg style="position:absolute;left:991px;top:330px" width="9" height="5" viewBox="0 0 9 5"><path d="M0 5 H9 L4.5 0 Z" fill="#333"/></svg>
<div style="position:absolute;left:1004px;top:322px;width:1px;height:22px;background:#d4d8dc"></div>
<div style="position:absolute;left:1165.5px;top:322px;width:1px;height:22px;background:#d4d8dc"></div>
<div style="position:absolute;left:1265.5px;top:322px;width:1px;height:22px;background:#d4d8dc"></div>
<span class="t" style="left:1007.5px;top:325px;color:#787878;-webkit-text-stroke:0.25px #ecf1f5;">Date accessed</span>
<span class="t" style="left:1168.5px;top:325px;color:#787878;-webkit-text-stroke:0.25px #ecf1f5;">Owner</span>
<span class="t" style="left:1268px;top:325px;color:#787878;-webkit-text-stroke:0.25px #ecf1f5;">Host</span>
<div style="position:absolute;left:725px;top:345px;width:1193px;height:24px;background:#1a8bd5"></div>
<svg style="position:absolute;left:730px;top:351.5px" width="16" height="14" viewBox="0 0 16 14"><rect x="0.6" y="0.6" width="13" height="9" fill="#9cc0d8" stroke="#6d9cbc" stroke-width="1.2"/><path d="M3 8 C6 5.5 9 10 15 7 M3 11.5 C6 9 9 13.5 15 10.5" stroke="#4a8fbd" stroke-width="1.8" fill="none"/></svg>
<span class="t" style="left:751.5px;top:349px;color:#dcf8ff;-webkit-text-stroke:0.25px #1a8bd5;">Game_X_Dev</span>
<span class="t" style="left:1008.5px;top:349px;color:#dcf8ff;-webkit-text-stroke:0.25px #1a8bd5;">2021/12/23 1</span>
<span class="t" style="left:1139px;top:349px;color:#dcf8ff;letter-spacing:-4.6px;">···</span>
<span class="t" style="left:1169.5px;top:349px;color:#dcf8ff;-webkit-text-stroke:0.25px #1a8bd5;">admin</span>
<div style="position:absolute;left:725px;top:719px;width:1193px;height:16.5px;background:#f0f0f0"></div>
<div style="position:absolute;left:741px;top:719px;width:1104.5px;height:16.5px;background:#cdcdcd"></div>
<svg style="position:absolute;left:730px;top:723px" width="5" height="9" viewBox="0 0 5 9"><path d="M5 0 V9 L0 4.5 Z" fill="#bdbdbd"/></svg>
<svg style="position:absolute;left:1908px;top:723px" width="5" height="9" viewBox="0 0 5 9"><path d="M0 0 V9 L5 4.5 Z" fill="#bdbdbd"/></svg>
<div style="position:absolute;left:0px;top:751px;width:1920px;height:1px;background:#a4a4a4"></div>
<div style="position:absolute;left:950px;top:748px;width:21px;height:1px;background:repeating-linear-gradient(90deg,#c2c2c2 0 1px,transparent 1px 4px)"></div>
<div style="position:absolute;left:1312px;top:740px;width:21px;height:1px;background:repeating-linear-gradient(90deg,#c8c8c8 0 1px,transparent 1px 4px)"></div>
<div style="position:absolute;left:0px;top:752px;width:109px;height:33px;background:#fdfdfd"></div>
<div style="position:absolute;left:0px;top:785px;width:109px;height:4px;background:#1b84c4"></div>
<div style="position:absolute;left:109px;top:787.5px;width:1811px;height:1px;background:#c6c6c6"></div>
<svg style="position:absolute;left:10px;top:763px" width="13" height="13" viewBox="0 0 13 13"><rect x="0.6" y="0.6" width="11.4" height="11.8" fill="#fafafa" stroke="#7a7a7a" stroke-width="1.2"/><path d="M2.6 3.4 H9 M2.6 5.6 H7 M2.6 7.8 H8 M2.6 10 H6" stroke="#9a9a9a" stroke-width="0.9"/></svg>
<span class="t" style="left:35px;top:762px;color:#5c5c5c;-webkit-text-stroke:0.25px #fdfdfd;">Log</span>
<svg style="position:absolute;left:88.5px;top:765.5px" width="10" height="10" viewBox="0 0 10 10"><rect x="0" y="0" width="9.6" height="9.6" rx="1" fill="#c62f3d"/><path d="M2.6 2.6 L7 7 M7 2.6 L2.6 7" stroke="#fff" stroke-width="1.5"/></svg>
<div style="position:absolute;left:0px;top:797px;width:1920px;height:1px;background:#a6a6a6"></div>
<div style="position:absolute;left:0;top:798px;width:1904px;height:173px;background:#fff;overflow:hidden">
<div style="position:absolute;left:0;top:0;width:4px;height:173px;background:linear-gradient(90deg,#e3f6fb,#fff)"></div>
<span class="t" style="left:30.5px;top:-7px;color:#7c7c7c;-webkit-text-stroke:0.25px #fff">p4 revert //Game/X_Dev/Project2D/Assets/Scripts/View/AnimatedTile.cs //Game/X_Dev/Project2D/Assets/Scripts/View/AnimatedTile.cs.meta //Game/X_Dev/Project2D/Assets/Scripts/View/ParallaxLayer.cs //Game/X_Dev/Project2D/Assets/Scripts/View/ParallaxLayer.cs.meta</span>
<svg style="position:absolute;left:7.5px;top:2px" width="9" height="9" viewBox="0 0 9 9"><circle cx="4.3" cy="4.3" r="4" fill="#2a86a8"/><circle cx="3.6" cy="3.4" r="1.4" fill="#bfe6f2"/></svg>
<span class="t" style="left:74.5px;top:17px;color:#151515;-webkit-text-stroke:0.25px #fff">4 files reverted</span>
<svg style="position:absolute;left:11.5px;top:22.5px" width="15" height="13" viewBox="0 0 15 13"><path d="M0 4 H8 V0 L15 6.5 L8 13 V9 H0 Z" fill="#2f9a4a"/></svg>
<span class="t" style="left:30.5px;top:41px;color:#7c7c7c;-webkit-text-stroke:0.25px #fff">p4 stream -o -v //Game/X_Dev</span>
<svg style="position:absolute;left:7.5px;top:50px" width="9" height="9" viewBox="0 0 9 9"><circle cx="4.3" cy="4.3" r="4" fill="#2a86a8"/><circle cx="3.6" cy="3.4" r="1.4" fill="#bfe6f2"/></svg>
<span class="t" style="left:30.5px;top:65px;color:#7c7c7c;-webkit-text-stroke:0.25px #fff">p4 stream -o -v //Game/main</span>
<svg style="position:absolute;left:7.5px;top:74px" width="9" height="9" viewBox="0 0 9 9"><circle cx="4.3" cy="4.3" r="4" fill="#2a86a8"/><circle cx="3.6" cy="3.4" r="1.4" fill="#bfe6f2"/></svg>
<span class="t" style="left:30.5px;top:89px;color:#7c7c7c;-webkit-text-stroke:0.25px #fff">p4 streams -F Name=X_Dev\ \(//Game/X_Dev\)*</span>
<svg style="position:absolute;left:7.5px;top:98px" width="9" height="9" viewBox="0 0 9 9"><circle cx="4.3" cy="4.3" r="4" fill="#2a86a8"/><circle cx="3.6" cy="3.4" r="1.4" fill="#bfe6f2"/></svg>
<span class="t" style="left:30.5px;top:113px;color:#7c7c7c;-webkit-text-stroke:0.25px #fff">p4 client -i</span>
<svg style="position:absolute;left:7.5px;top:122px" width="9" height="9" viewBox="0 0 9 9"><circle cx="4.3" cy="4.3" r="4" fill="#2a86a8"/><circle cx="3.6" cy="3.4" r="1.4" fill="#bfe6f2"/></svg>
<span class="t" style="left:30.5px;top:137px;color:#7c7c7c;-webkit-text-stroke:0.25px #fff">p4 streams -F Name=X_Dev\ \(//Game/X_Dev\)*</span>
<svg style="position:absolute;left:7.5px;top:146px" width="9" height="9" viewBox="0 0 9 9"><circle cx="4.3" cy="4.3" r="4" fill="#2a86a8"/><circle cx="3.6" cy="3.4" r="1.4" fill="#bfe6f2"/></svg>
<span class="t" style="left:30.5px;top:161px;color:#7c7c7c;-webkit-text-stroke:0.25px #fff">p4 streams -F Name=X_Dev\ \(//Game/X_Dev\)*</span>
<svg style="position:absolute;left:7.5px;top:170px" width="9" height="9" viewBox="0 0 9 9"><circle cx="4.3" cy="4.3" r="4" fill="#2a86a8"/><circle cx="3.6" cy="3.4" r="1.4" fill="#bfe6f2"/></svg>
</div>
<div style="position:absolute;left:1904px;top:798px;width:16px;height:173px;background:#f0f0f0"></div>
<div style="position:absolute;left:1904px;top:911.5px;width:16px;height:39px;background:#cdcdcd"></div>
<svg style="position:absolute;left:1908px;top:805px" width="9" height="5" viewBox="0 0 9 5"><path d="M0 5 H9 L4.5 0 Z" fill="#c4c4c4"/></svg>
<svg style="position:absolute;left:1908px;top:961px" width="9" height="5" viewBox="0 0 9 5"><path d="M0 0 H9 L4.5 5 Z" fill="#b4b4b4"/></svg>
<div style="position:absolute;left:0px;top:971px;width:1904px;height:16.5px;background:#f0f0f0"></div>
<div style="position:absolute;left:16.5px;top:971px;width:1532px;height:16.5px;background:#cdcdcd"></div>
<svg style="position:absolute;left:4px;top:974.5px" width="5" height="9" viewBox="0 0 5 9"><path d="M5 0 V9 L0 4.5 Z" fill="#c4c4c4"/></svg>
<svg style="position:absolute;left:1894px;top:974.5px" width="5" height="9" viewBox="0 0 5 9"><path d="M0 0 V9 L5 4.5 Z" fill="#b4b4b4"/></svg>
<div style="position:absolute;left:1904px;top:971px;width:16px;height:16.5px;background:#fafafa"></div>
<div style="position:absolute;left:0px;top:987.5px;width:1920px;height:1px;background:#a6a6a6"></div>
<span class="t" style="left:7px;top:995px;-webkit-text-stroke:0.25px #f0f0f0;">d:\Workspaces\Game_X_Dev\Project2D\Assets\Environment</span>
<div style="position:absolute;left:1917px;top:993px;width:1px;height:23px;background:#b0b0b0"></div>
<div style="position:absolute;left:402px;top:515.5px;width:602px;height:27px;background:#ffffbf;border:1px solid #b9b988;border-top-color:#e0e0ac;border-left-color:#e0e0ac;box-sizing:border-box;box-shadow:2px 2px 2px rgba(0,0,0,0.36)"></div>
<span class="t" style="left:407px;top:520px;color:#151515;-webkit-text-stroke:0.25px #ffffbf;">d:\Workspaces\Game_X_Dev\Project2D\Assets\Scripts\View</span>
<svg style="position:absolute;left:755px;top:219.5px" width="12" height="19" viewBox="0 0 12 19"><path d="M0.7 0.7 V15 L4 11.8 L6.6 17.8 L8.8 16.8 L6.2 11 H10.8 Z" fill="#fff" stroke="#111" stroke-width="1.1"/></svg>
</div></body></html>
